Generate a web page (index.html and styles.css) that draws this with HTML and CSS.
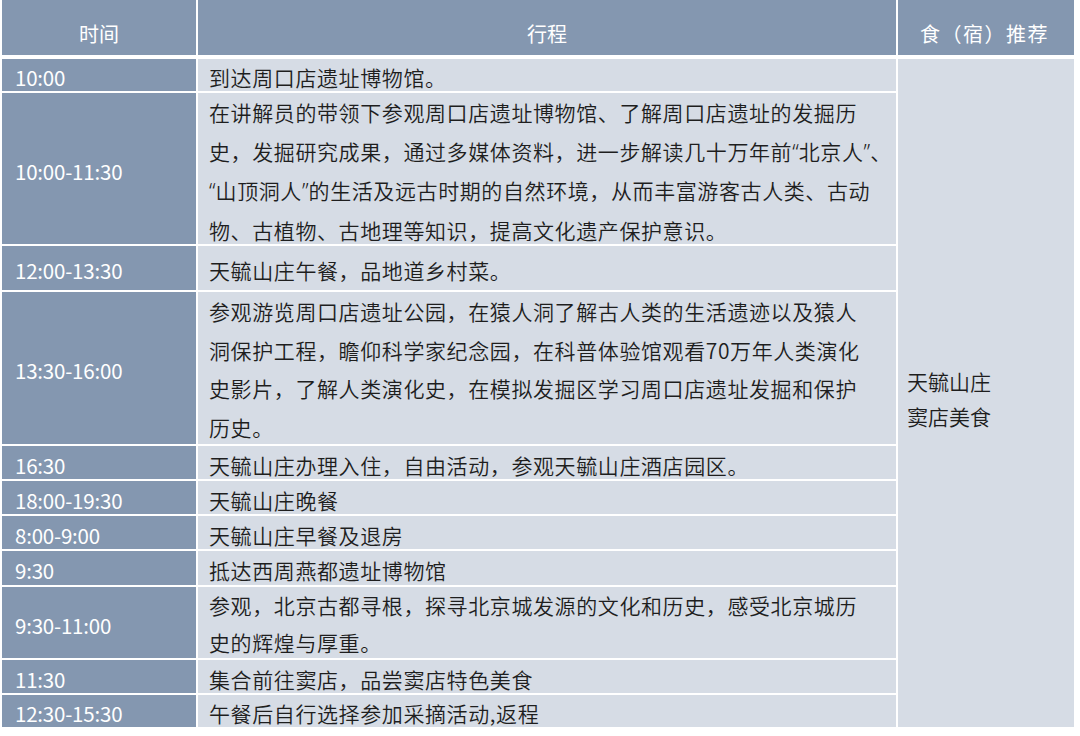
FILE: index.html
```html
<!DOCTYPE html>
<html lang="zh">
<head>
<meta charset="utf-8">
<link rel="stylesheet" href="styles.css">
</head>
<body>
<div class="sched">
  <div class="hd c1">时间</div>
  <div class="hd c2">行程</div>
  <div class="hd c3">食（宿）推荐</div>

  <div class="t r1">10:00</div>
  <div class="d r1">到达周口店遗址博物馆。</div>
  <div class="food">天毓山庄<br>窦店美食</div>

  <div class="t r2">10:00-11:30</div>
  <div class="d r2 multi">在讲解员的带领下参观周口店遗址博物馆、了解周口店遗址的发掘历<br>史，发掘研究成果，通过多媒体资料，进一步解读几十万年前<span class="q">“</span>北京人<span class="q">”</span>、<br><span class="q">“</span>山顶洞人<span class="q">”</span>的生活及远古时期的自然环境，从而丰富游客古人类、古动<br>物、古植物、古地理等知识，提高文化遗产保护意识。</div>

  <div class="t r3">12:00-13:30</div>
  <div class="d r3">天毓山庄午餐，品地道乡村菜。</div>

  <div class="t r4">13:30-16:00</div>
  <div class="d r4 multi">参观游览周口店遗址公园，在猿人洞了解古人类的生活遗迹以及猿人<br>洞保护工程，瞻仰科学家纪念园，在科普体验馆观看70万年人类演化<br>史影片，了解人类演化史，在模拟发掘区学习周口店遗址发掘和保护<br>历史。</div>

  <div class="t r5">16:30</div>
  <div class="d r5">天毓山庄办理入住，自由活动，参观天毓山庄酒店园区。</div>

  <div class="t r6">18:00-19:30</div>
  <div class="d r6">天毓山庄晚餐</div>

  <div class="t r7">8:00-9:00</div>
  <div class="d r7">天毓山庄早餐及退房</div>

  <div class="t r8">9:30</div>
  <div class="d r8">抵达西周燕都遗址博物馆</div>

  <div class="t r9">9:30-11:00</div>
  <div class="d r9 multi2">参观，北京古都寻根，探寻北京城发源的文化和历史，感受北京城历<br>史的辉煌与厚重。</div>

  <div class="t r10">11:30</div>
  <div class="d r10">集合前往窦店，品尝窦店特色美食</div>

  <div class="t r11">12:30-15:30</div>
  <div class="d r11">午餐后自行选择参加采摘活动,返程</div>
</div>
</body>
</html>
```

FILE: styles.css
```css
html, body {
  margin: 0;
  padding: 0;
  background: #ffffff;
}
body {
  font-family: "Noto Sans CJK SC", "Noto Sans", sans-serif;
  font-weight: 350;
  color: #1e1e1e;
}
.sched {
  margin-left: 2px;
  width: 1072px;
  display: grid;
  grid-template-columns: 194px 698px 176px;
  grid-template-rows: 57px 32px 151px 44px 152px 33px 33px 33px 34px 71px 33px 32px;
  column-gap: 2px;
  row-gap: 2px;
  background: #ffffff;
}
.hd {
  background: #8497b0;
  color: #ffffff;
  font-size: 20px;
  font-weight: 400;
  height: 55px;
  box-sizing: border-box;
  padding-top: 20px;
  line-height: 28px;
  text-align: center;
}
.hd.c3 {
  text-align: left;
  padding-left: 22px;
  letter-spacing: 1.5px;
}
.t {
  grid-column: 1;
  background: #8497b0;
  color: #ffffff;
  font-size: 20.5px;
  font-weight: 400;
  display: flex;
  align-items: center;
  padding-left: 13px;
  padding-top: 4px;
  letter-spacing: -0.2px;
}
.d {
  grid-column: 2;
  background: #d6dce5;
  font-size: 21px;
  display: flex;
  align-items: center;
  padding-left: 11px;
  padding-top: 4px;
  line-height: 28px;
  white-space: nowrap;
  letter-spacing: 0.6px;
}
.d.multi {
  display: block;
  line-height: 38.5px;
  padding-top: 0;
}
.d.multi2 {
  display: block;
  line-height: 37px;
  padding-top: 0;
}
.q {
  font-family: "Noto Sans", sans-serif;
  font-weight: 300;
  letter-spacing: 0;
}
.food {
  grid-column: 3;
  grid-row: 2 / 13;
  background: #d6dce5;
  font-size: 21px;
  line-height: 35px;
  display: flex;
  align-items: center;
  padding-left: 9px;
  padding-top: 12px;
  box-sizing: border-box;
}
```
